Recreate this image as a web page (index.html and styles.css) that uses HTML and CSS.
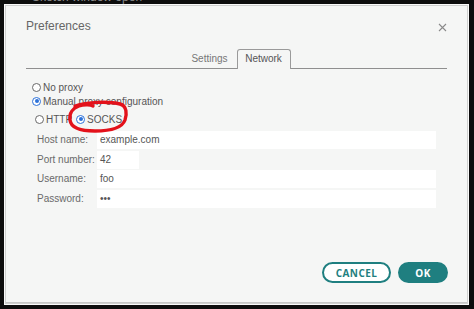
FILE: index.html
```html
<!DOCTYPE html>
<html lang="en">
<head>
    <meta charset="UTF-8">
    <meta name="viewport" content="width=device-width, initial-scale=1.0">
    <title>Preferences</title>
    <link rel="stylesheet" href="styles.css">
</head>
<body>
    <div class="behind"><span>Sketch window open</span></div>

    <div class="dialog">
        <div class="dialog-header">
            <span class="title">Preferences</span>
            <svg class="close" width="9" height="9" viewBox="0 0 9 9">
                <path d="M1 1 L8 8 M8 1 L1 8" stroke="#8a8a8a" stroke-width="1.1" fill="none"/>
            </svg>
        </div>

        <div class="tabs">
            <div class="tab">Settings</div>
            <div class="tab active">Network</div>
        </div>

        <div class="pane">
            <label class="radio"><span class="dot"></span>No proxy</label>
            <label class="radio"><span class="dot checked"></span>Manual proxy configuration</label>
            <div class="proxy-type">
                <label class="radio"><span class="dot"></span>HTTP</label>
                <label class="radio"><span class="dot checked"></span>SOCKS</label>
            </div>

            <div class="fields">
                <span class="field-label">Host name:</span>
                <div class="input">example.com</div>
                <span class="field-label">Port number:</span>
                <div class="input short">42</div>
                <span class="field-label">Username:</span>
                <div class="input">foo</div>
                <span class="field-label">Password:</span>
                <div class="input">&bull;&bull;&bull;</div>
            </div>
        </div>

        <div class="footer">
            <button class="btn outline">CANCEL</button>
            <button class="btn filled">OK</button>
        </div>
    </div>

    <!-- hand drawn mark around the SOCKS option -->
    <svg class="scribble" width="66" height="36" viewBox="0 0 66 36">
        <path d="M10 6 C22 2 44 1 55 4 C62 6 62 14 60 20 C57 28 45 31 30 31 C16 31 6 28 5 20 C4 13 8 8 14 6 C20 4 26 5 28 6"
              stroke="#e3121b" stroke-width="3.4" fill="none" stroke-linecap="round"/>
    </svg>
</body>
</html>
```

FILE: styles.css
```css
body {
    margin: 0;
    padding: 0 5px 0 4px;
    background: #0d0d0d;
    font-family: "Liberation Sans", Arial, sans-serif;
    position: relative;
    height: 309px;
    box-sizing: border-box;
    overflow: hidden;
}
.behind {
    height: 4px;
    overflow: hidden;
    padding-left: 28px;
    font-size: 12px;
    color: #8c8c8c;
}
.behind span {
    display: block;
    margin-top: -10px;
}
.dialog {
    width: 465px;
    height: 301px;
    box-sizing: border-box;
    background: #f5f6f5;
    border: 1px solid #fafafa;
    box-shadow: inset 0 0 0 1px #cfd0cf, inset 0 -2px 0 #c6c7c6;
    display: flex;
    flex-direction: column;
}
.dialog-header {
    display: flex;
    justify-content: space-between;
    align-items: center;
    padding: 11px 21px 0 21px;
    height: 20px;
}
.title {
    font-size: 12px;
    color: #666;
}
.close {
    margin-top: 2px;
}
.tabs {
    display: flex;
    justify-content: center;
    margin: 13px 21px 0 21px;
    border-bottom: 1px solid #8f8f8f;
    height: 19px;
}
.tab {
    width: 54px;
    box-sizing: border-box;
    text-align: center;
    font-size: 10px;
    line-height: 19px;
    color: #777;
}
.tab.active {
    border: 1px solid #9a9a9a;
    border-bottom: none;
    border-radius: 3px 3px 0 0;
    background: #f5f6f5;
    color: #555;
    height: 20px;
    line-height: 18px;
}
.pane {
    padding: 11px 32px 0 27px;
}
.radio {
    display: flex;
    align-items: center;
    height: 14px;
    font-size: 10px;
    color: #555;
}
.dot {
    width: 9px;
    height: 9px;
    box-sizing: border-box;
    border: 1px solid #6a6a6a;
    border-radius: 50%;
    margin-right: 2px;
    background: #fff;
    position: relative;
}
.dot.checked {
    border-color: #2d72d9;
}
.dot.checked::after {
    content: "";
    position: absolute;
    left: 1.5px;
    top: 1.5px;
    width: 4px;
    height: 4px;
    border-radius: 50%;
    background: #2d72d9;
}
.proxy-type {
    display: flex;
    gap: 4px;
    margin-top: 4px;
    padding-left: 3px;
}
.fields {
    display: grid;
    grid-template-columns: 60px 1fr;
    row-gap: 1.5px;
    margin-top: 5px;
    padding-left: 5px;
}
.field-label {
    font-size: 10px;
    color: #6a6a6a;
    line-height: 18px;
    white-space: nowrap;
}
.input {
    height: 18px;
    line-height: 18px;
    background: #fff;
    font-size: 10px;
    color: #555;
    padding-left: 3px;
}
.input.short {
    width: 39px;
}
.footer {
    margin-top: auto;
    display: flex;
    justify-content: flex-end;
    gap: 7px;
    padding: 0 20px 21px 0;
}
.btn {
    height: 21px;
    border-radius: 11px;
    font-family: "Open Sans", "Liberation Sans", sans-serif;
    font-weight: 700;
    font-size: 10px;
    letter-spacing: 0.4px;
    padding: 0;
    box-sizing: border-box;
}
.btn.outline {
    width: 69px;
    background: #fff;
    border: 2px solid #1f7f80;
    color: #1f7f80;
}
.btn.filled {
    width: 50px;
    background: #1f7f80;
    border: 2px solid #1f7f80;
    color: #fff;
}
.scribble {
    position: absolute;
    left: 65px;
    top: 100px;
}
```
